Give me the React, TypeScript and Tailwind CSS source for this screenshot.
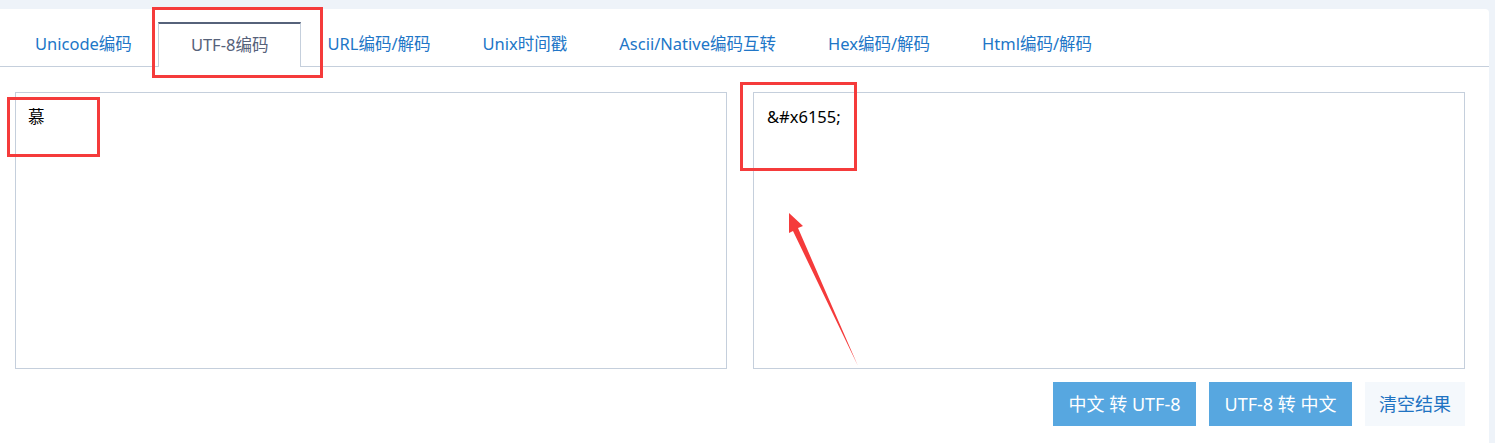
const tabs = [
  "Unicode编码",
  "UTF-8编码",
  "URL编码/解码",
  "Unix时间戳",
  "Ascii/Native编码互转",
  "Hex编码/解码",
  "Html编码/解码",
];

const font = { fontFamily: '"Noto Sans", "Noto Sans CJK SC", sans-serif' };

export default function App() {
  const active = 1;

  return (
    <div
      className="relative w-[1495px] h-[443px] bg-[#eef3f9] pt-[9px] pr-[6px] overflow-hidden"
      style={font}
    >
      <div className="bg-white h-full rounded-tr-[4px]">
        {/* tab bar */}
        <div className="flex items-end h-[58px] pl-[9px] border-b border-[#c5cfdc]">
          {tabs.map((t, i) =>
            i === active ? (
              <div
                key={t}
                className="h-[45px] -mb-px px-[32px] flex items-center bg-white border-t-2 border-t-[#56627a] border-x border-x-[#c5cfdc] text-[16.5px] text-[#56627a]"
              >
                {t}
              </div>
            ) : (
              <div
                key={t}
                className="h-[44px] px-[26px] flex items-center text-[16.5px] text-[#2176c7] cursor-pointer"
              >
                {t}
              </div>
            )
          )}
        </div>

        {/* content */}
        <div className="pl-[15px] pr-[24px] pt-[25px]">
          <div className="grid grid-cols-2 gap-[26px]">
            <textarea
              readOnly
              defaultValue="慕"
              className="h-[277px] resize-none border border-[#c5cfdc] px-[12px] py-[12px] text-[16.5px] leading-[24px] text-black outline-none"
              style={font}
            />
            <textarea
              readOnly
              defaultValue={"&#x6155;"}
              className="h-[277px] resize-none border border-[#c5cfdc] px-[13px] py-[12px] text-[16.5px] leading-[24px] text-black outline-none"
              style={font}
            />
          </div>

          <div className="flex justify-end gap-[13px] mt-[13px]">
            <button className="w-[143px] h-[44px] bg-[#57a7e0] text-white text-[18px]">
              中文 转 UTF-8
            </button>
            <button className="w-[143px] h-[44px] bg-[#57a7e0] text-white text-[18px]">
              UTF-8 转 中文
            </button>
            <button className="w-[100px] h-[44px] bg-[#f4f8fc] text-[#1f73c2] text-[18px]">
              清空结果
            </button>
          </div>
        </div>
      </div>

      {/* annotations */}
      <div className="absolute left-[152px] top-[7px] w-[171px] h-[71px] border-[3px] border-[#f53b3b]" />
      <div className="absolute left-[7px] top-[97px] w-[93px] h-[60px] border-[3px] border-[#f53b3b]" />
      <div className="absolute left-[740px] top-[82px] w-[117px] h-[89px] border-[3px] border-[#f53b3b]" />
      <svg
        className="absolute left-0 top-0 pointer-events-none"
        width="1495"
        height="443"
        viewBox="0 0 1495 443"
      >
        <polygon
          points="789,213 803,226 798,228 858,366 793,231 789,233"
          fill="#f53b3b"
        />
      </svg>
    </div>
  );
}
